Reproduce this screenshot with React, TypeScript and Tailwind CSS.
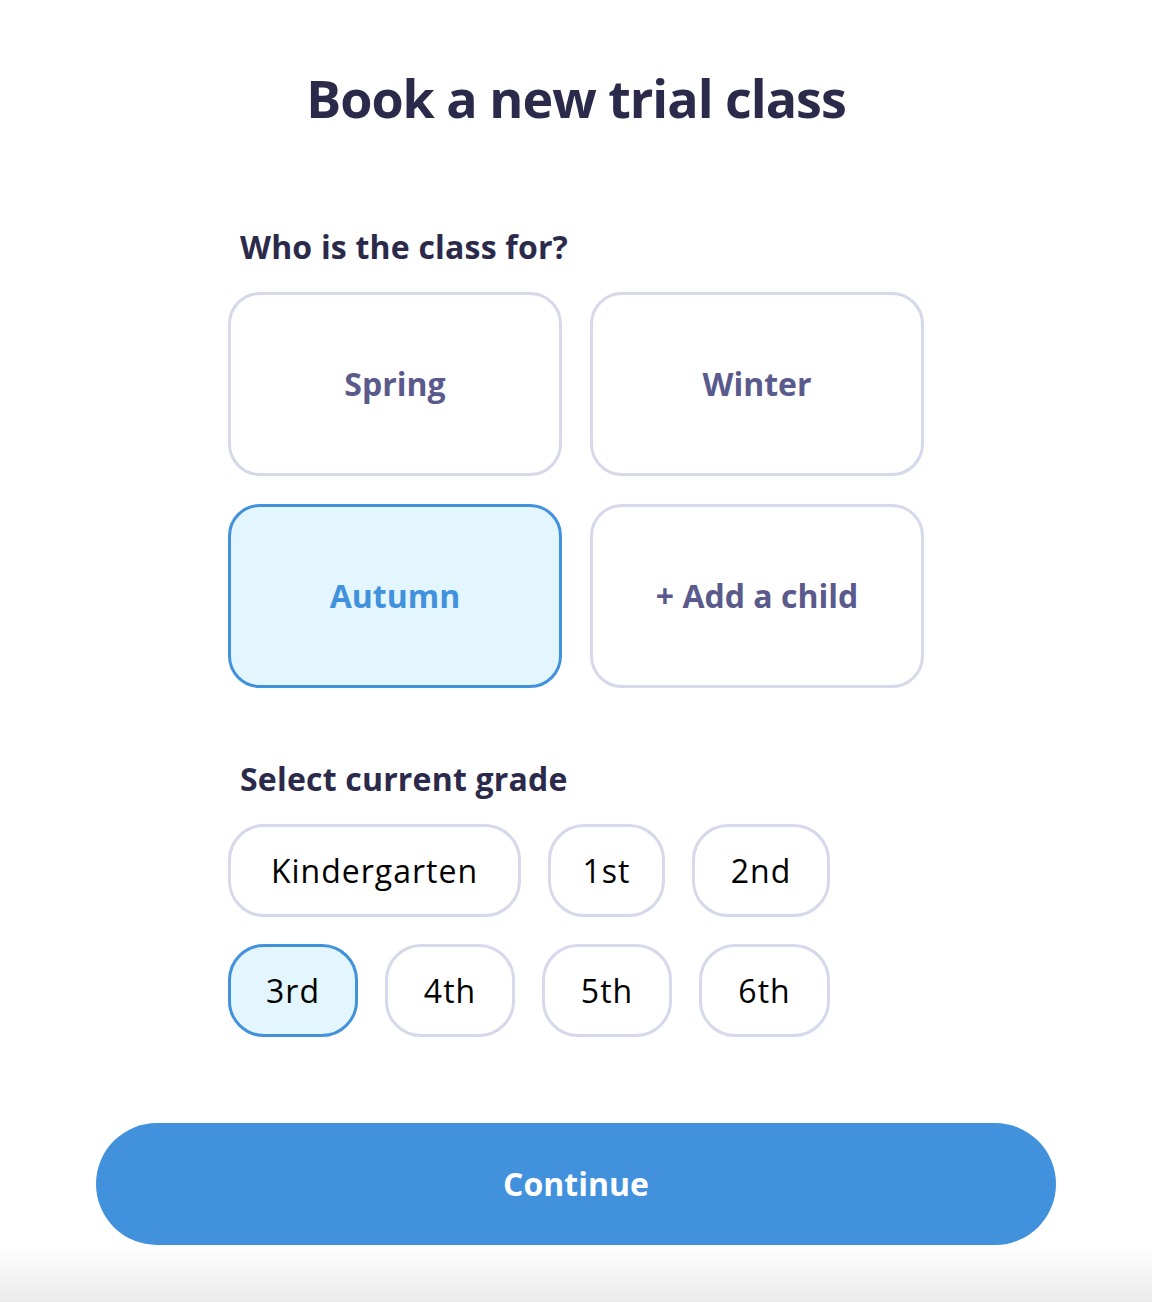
import { useState } from "react";

const children = ["Spring", "Winter", "Autumn", "+ Add a child"];

const grades = [
  { label: "Kindergarten", w: "w-[293px]" },
  { label: "1st", w: "w-[117px]" },
  { label: "2nd", w: "w-[138px]" },
  { label: "3rd", w: "w-[130px]" },
  { label: "4th", w: "w-[130px]" },
  { label: "5th", w: "w-[130px]" },
  { label: "6th", w: "w-[131px]" },
];

export default function App() {
  const [child, setChild] = useState("Autumn");
  const [grade, setGrade] = useState("3rd");

  const font = { fontFamily: "'Open Sans', Lato, sans-serif" };

  return (
    <div className="min-h-[1302px] bg-white flex flex-col items-center pr-[6px]" style={font}>
      <h1 className="mt-[64px] text-[52px] leading-[67px] font-bold text-[#2b2a4b] tracking-[-1px]">
        Book a new trial class
      </h1>

      <div className="w-[696px] mt-[98px]">
        <p className="pl-3 text-[32px] leading-[36px] font-bold text-[#2b2a4b] tracking-[0.2px]">Who is the class for?</p>

        <div className="mt-[27px] grid grid-cols-2 gap-[28px]">
          {children.map((c) => {
            const active = c === child;
            return (
              <button
                key={c}
                onClick={() => setChild(c)}
                className={
                  active
                    ? "h-[184px] rounded-[32px] border-[3px] border-[#4191dc] bg-[#e3f5fd] text-[#4191dc] text-[32px] font-bold"
                    : "h-[184px] rounded-[32px] border-[3px] border-[#d6d8eb] bg-white text-[#5a5a8c] text-[32px] font-bold"
                }
              >
                {c}
              </button>
            );
          })}
        </div>

        <p className="mt-[73px] pl-3 text-[32px] leading-[36px] font-bold text-[#2b2a4b] tracking-[0.2px]">Select current grade</p>

        <div className="mt-[27px] flex flex-col gap-[27px]">
          {[grades.slice(0, 3), grades.slice(3)].map((row, i) => (
            <div key={i} className="flex gap-[27px]">
              {row.map((g) => {
                const active = g.label === grade;
                return (
                  <button
                    key={g.label}
                    onClick={() => setGrade(g.label)}
                    className={
                      (active
                        ? "border-[#4191dc] bg-[#e3f5fd] "
                        : "border-[#d6d8eb] bg-white ") +
                      g.w +
                      " h-[93px] rounded-[36px] border-[3px] text-[32px] text-black font-normal tracking-[1px]"
                    }
                  >
                    {g.label}
                  </button>
                );
              })}
            </div>
          ))}
        </div>
      </div>

      <button className="mt-[86px] w-[960px] h-[122px] rounded-full bg-[#4191dc] text-white text-[32px] font-bold">
        Continue
      </button>

      <div className="w-full h-[58px] bg-gradient-to-b from-white to-[#ebebeb]" />
    </div>
  );
}
